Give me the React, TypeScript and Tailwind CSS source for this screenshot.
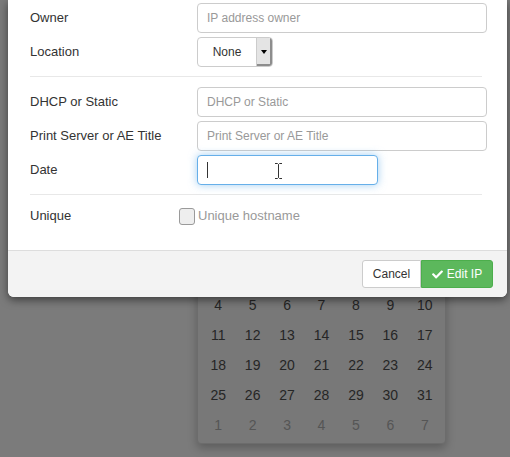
import { FaCheck } from "react-icons/fa";

const weeks: number[][] = [
  [28, 29, 30, 31, 1, 2, 3],
  [4, 5, 6, 7, 8, 9, 10],
  [11, 12, 13, 14, 15, 16, 17],
  [18, 19, 20, 21, 22, 23, 24],
  [25, 26, 27, 28, 29, 30, 31],
  [1, 2, 3, 4, 5, 6, 7],
];

function Row({ label, children }: { label: string; children: React.ReactNode }) {
  return (
    <div className="flex h-[30px] items-center">
      <label className="w-[189px] shrink-0 pl-[22px] text-[13px] text-[#333]">{label}</label>
      {children}
    </div>
  );
}

function TextInput({ placeholder }: { placeholder: string }) {
  return (
    <input
      placeholder={placeholder}
      className="h-[30px] w-[290px] rounded-[4px] border border-[#ccc] bg-white px-[9px] text-[12px] text-[#333] outline-none placeholder:text-[#999]"
    />
  );
}

function IBeam() {
  return (
    <svg
      className="absolute left-[76px] top-[6px]"
      width="9"
      height="18"
      viewBox="0 0 9 18"
      fill="none"
    >
      <path
        d="M1 1.5h2.5l1 1 1-1H8M4.5 2.5v13M1 16.5h2.5l1-1 1 1H8"
        stroke="#fff"
        strokeWidth="2.5"
      />
      <path
        d="M1 1.5h2.5l1 1 1-1H8M4.5 2.5v13M1 16.5h2.5l1-1 1 1H8"
        stroke="#333"
        strokeWidth="1"
      />
    </svg>
  );
}

export default function App() {
  return (
    <div className="relative h-[457px] w-[510px] overflow-hidden bg-[#7b7b7b] font-['Liberation_Sans',Arial,sans-serif]">
      {/* datepicker popup hanging below the Date field */}
      <div className="absolute left-[197px] top-[259px] w-[249px] rounded-[4px] border border-[#6c6c6c] bg-[#787878] px-[3px] pb-[3px] shadow-[0_4px_10px_rgba(0,0,0,0.25)]">
        {weeks.map((week, w) => (
          <div key={w} className="grid h-[30px] grid-cols-7 items-center text-center text-[14px]">
            {week.map((d, i) => (
              <span
                key={i}
                className={
                  w === weeks.length - 1 || (w === 0 && d > 20)
                    ? "text-[#555]"
                    : "text-[#262626]"
                }
              >
                {d}
              </span>
            ))}
          </div>
        ))}
      </div>

      {/* modal */}
      <div className="relative z-10 ml-[8px] w-[499px] rounded-b-[6px] bg-white shadow-[0_3px_9px_rgba(0,0,0,0.5)]">
        <div className="flex flex-col gap-[4px] pt-[3px]">
          <Row label="Owner">
            <TextInput placeholder="IP address owner" />
          </Row>
          <Row label="Location">
            <div className="flex h-[30px] w-[76px] overflow-hidden rounded-[4px] border border-[#ccc] bg-white">
              <span className="flex flex-1 items-center justify-center text-[12px] text-[#333]">None</span>
              <span className="flex w-[16px] items-center justify-center border-l border-[#ccc] bg-[#e4e4e4] shadow-[inset_-2px_-2px_0_#8d8d8d]">
                <span className="mr-[1px] h-0 w-0 border-x-[3px] border-t-[4px] border-x-transparent border-t-black" />
              </span>
            </div>
          </Row>
        </div>

        <div className="ml-[22px] mt-[9px] h-px w-[452px] bg-[#e8e8e8]" />

        <div className="mt-[10px] flex flex-col gap-[4px]">
          <Row label="DHCP or Static">
            <TextInput placeholder="DHCP or Static" />
          </Row>
          <Row label="Print Server or AE Title">
            <TextInput placeholder="Print Server or AE Title" />
          </Row>
          <Row label="Date">
            <div className="relative flex h-[30px] w-[181px] items-center rounded-[4px] border border-[#66afe9] bg-white px-[9px] shadow-[0_0_8px_rgba(102,175,233,0.6)]">
              <span className="h-[16px] w-px bg-[#333]" />
              <IBeam />
            </div>
          </Row>
        </div>

        <div className="ml-[22px] mt-[9px] h-px w-[452px] bg-[#e8e8e8]" />

        <div className="mt-[6px] flex h-[30px] items-center">
          <label className="w-[171px] shrink-0 pl-[22px] text-[13px] text-[#333]">Unique</label>
          <span className="mr-[3px] h-[17px] w-[16px] rounded-[3px] border border-[#9a9a9a] bg-[#eee]" />
          <span className="text-[13px] text-[#999]">Unique hostname</span>
        </div>

        <div className="mt-[19px] flex justify-end rounded-b-[6px] border-t border-[#ddd] bg-[#f3f3f3] px-[14px] py-[9px]">
          <button className="h-[28px] w-[59px] rounded-l-[3px] border border-[#ccc] bg-white text-[12px] text-[#333]">
            Cancel
          </button>
          <button className="flex h-[28px] w-[72px] items-center justify-center gap-[4px] rounded-r-[3px] border border-[#4cae4c] bg-[#5cb85c] text-[12px] text-white">
            <FaCheck className="h-[11px] w-[11px]" />
            Edit IP
          </button>
        </div>
      </div>
    </div>
  );
}
